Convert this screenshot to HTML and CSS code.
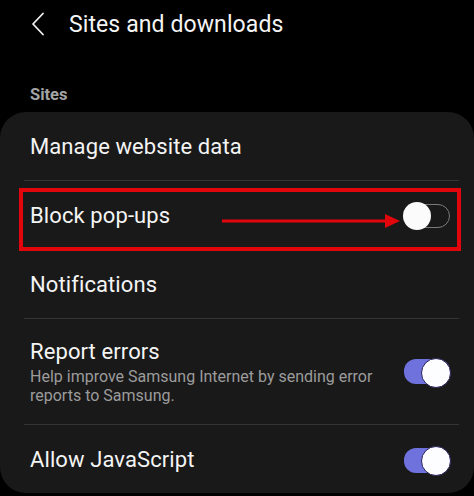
FILE: index.html
```html
<!DOCTYPE html>
<html lang="en">

<head>
    <meta charset="UTF-8">
    <meta name="viewport" content="width=device-width, initial-scale=1.0">
    <title>Sites and downloads</title>
    <link rel="stylesheet" href="styles.css">
</head>

<body>
    <header class="topbar">
        <svg class="back" width="14" height="24" viewBox="0 0 14 24">
            <path d="M12 1.5 L2 12 L12 22.5" fill="none" stroke="#f2f2f2" stroke-width="1.8" stroke-linecap="round" stroke-linejoin="round" />
        </svg>
        <h1 class="title">Sites and downloads</h1>
    </header>

    <h2 class="section-label">Sites</h2>

    <section class="card">
        <div class="row">
            <span class="row-title">Manage website data</span>
        </div>
        <div class="divider"></div>

        <div class="row row-marked">
            <span class="row-title">Block pop-ups</span>
            <span class="switch"></span>
            <!-- annotation -->
            <div class="mark-box"></div>
            <svg class="mark-arrow" width="180" height="16" viewBox="0 0 180 16">
                <rect x="0" y="6.5" width="166" height="3" fill="#e3050c" />
                <polygon points="163,1 178,8 163,15" fill="#e3050c" />
            </svg>
        </div>
        <div class="divider"></div>

        <div class="row">
            <span class="row-title">Notifications</span>
        </div>
        <div class="divider"></div>

        <div class="row row-tall">
            <div class="row-text">
                <span class="row-title">Report errors</span>
                <p class="row-sub">Help improve Samsung Internet by sending error reports to Samsung.</p>
            </div>
            <span class="switch on"></span>
        </div>
        <div class="divider"></div>

        <div class="row">
            <span class="row-title">Allow JavaScript</span>
            <span class="switch on"></span>
        </div>
    </section>
</body>

</html>
```

FILE: styles.css
```css
* {
    margin: 0;
    padding: 0;
    box-sizing: border-box;
}

body {
    background-color: #000;
    color: #f4f4f4;
    font-family: Roboto, "Noto Sans", sans-serif;
    overflow: hidden;
}

.topbar {
    height: 48px;
    display: flex;
    align-items: center;
    padding-left: 31px;
}

.back {
    margin-right: 24px;
}

.title {
    font-size: 23px;
    font-weight: 400;
    letter-spacing: 0.1px;
}

.section-label {
    margin: 37px 0 0 30px;
    height: 20px;
    line-height: 20px;
    font-size: 16.5px;
    font-weight: 700;
    color: #a4a4a4;
}

.card {
    margin-top: 7px;
    background-color: #191919;
    border-radius: 26px;
    overflow: hidden;
}

.row {
    position: relative;
    min-height: 68px;
    display: flex;
    align-items: center;
    justify-content: space-between;
    padding: 2px 24px 0 30px;
}

.row-tall {
    min-height: 105px;
    padding-top: 14px;
    padding-bottom: 14px;
}

.row-text {
    flex: 1;
    padding-right: 30px;
}

.row-title {
    font-size: 22px;
    line-height: 26px;
    letter-spacing: 0.1px;
}

.row-sub {
    margin-top: 2px;
    font-size: 16px;
    line-height: 19px;
    color: #9c9c9c;
}

.divider {
    height: 1px;
    margin: 0 15px 0 24px;
    background-color: #343434;
}

/* switches */
.switch {
    position: relative;
    flex: none;
    width: 46px;
    height: 24px;
    border: 1.5px solid #7a7a7a;
    border-radius: 12px;
}

.switch::after {
    content: "";
    position: absolute;
    top: -3.5px;
    left: -2px;
    width: 28px;
    height: 28px;
    border-radius: 50%;
    background-color: #fbfbfb;
}

.switch.on {
    border: none;
    height: 25px;
    background-color: #6f71dd;
}

.switch.on::after {
    top: -1.5px;
    left: auto;
    right: -1px;
    background-color: #fdfdff;
    border: 1.5px solid #231f55;
}

/* red annotation */
.mark-box {
    position: absolute;
    top: 7px;
    bottom: -2px;
    left: 19px;
    right: 13px;
    border: 4.5px solid #e3050c;
}

.mark-arrow {
    position: absolute;
    left: 222px;
    top: 32px;
}
```
